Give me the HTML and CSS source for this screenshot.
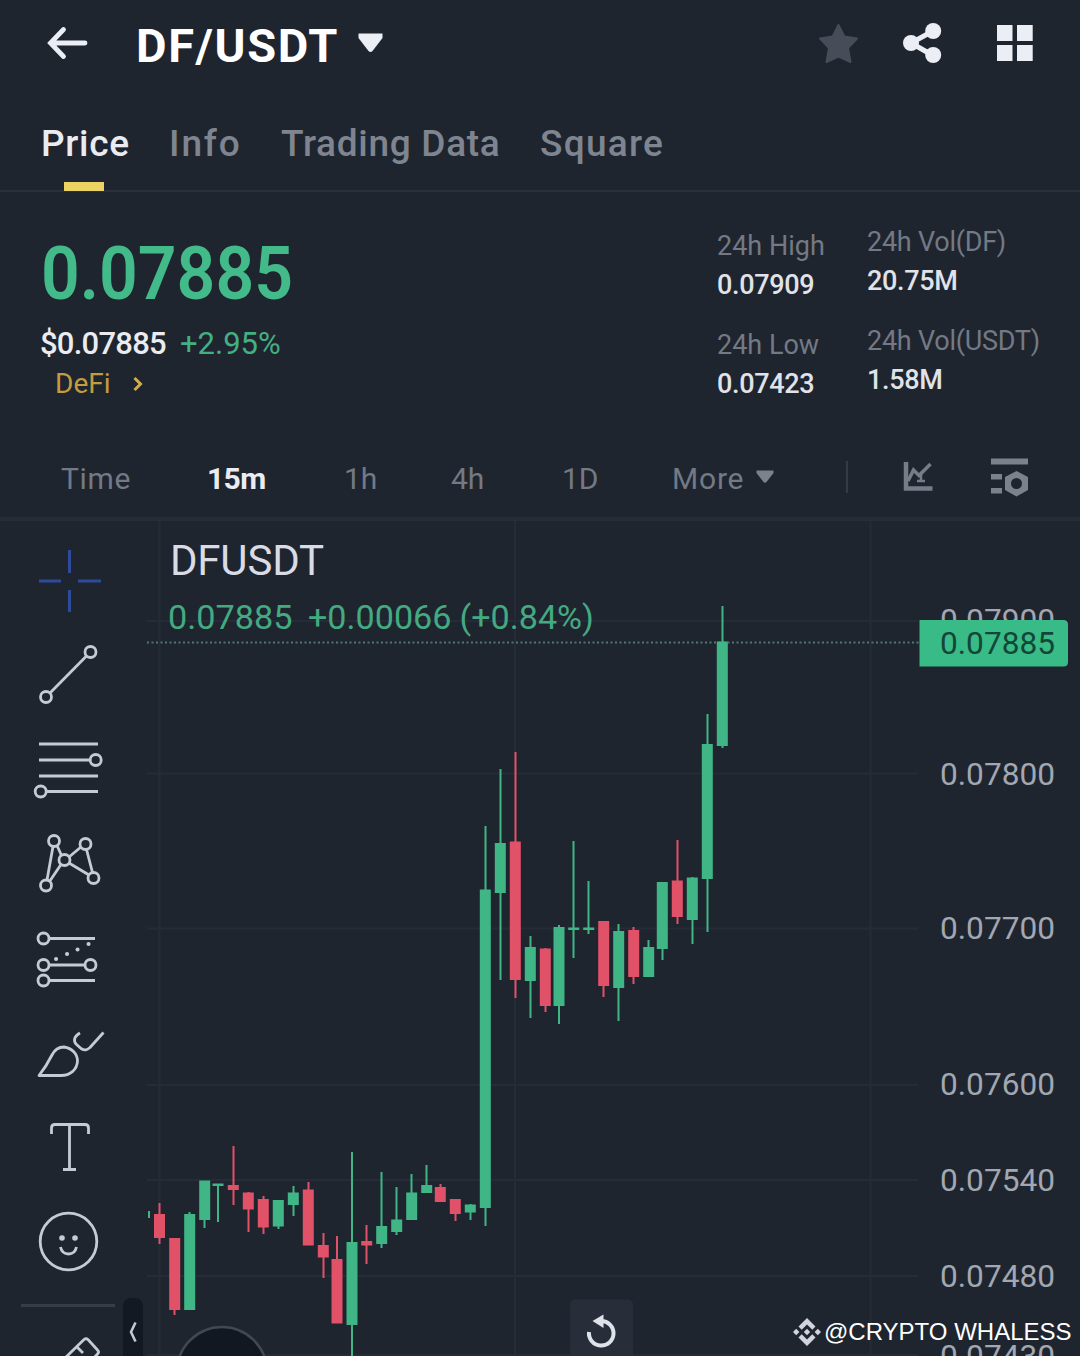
FILE: index.html
```html
<!DOCTYPE html>
<html lang="en">
<head>
<meta charset="utf-8">
<title>DF/USDT</title>
<link rel="stylesheet" href="styles.css">
</head>
<body>
<main class="screen">
  <header class="header">
    <svg class="back" width="42" height="34" viewBox="47 26 42 34"><path d="M63.500 29.500L50.500 43L63.500 56.500M51 43H85"/></svg>
    <h1 class="pair">DF/USDT</h1>
    <svg class="pair-caret" width="26" height="20" viewBox="358 34 26 20"><path d="M358.500 34.500H382.500V39L372.500 52Q370.500 54 368.500 52L358.500 39Z"/></svg>
    <nav class="actions">
      <svg width="42" height="42" viewBox="818 22 42 42"><path class="star" d="M838.500 25L844.300 36.500L857 38.500L848 48L850.500 62L838.500 56.500L826.500 62L829 48L820 38.500L832.700 36.500Z"/></svg>
      <svg width="42" height="42" viewBox="902 22 42 42"><path class="share-link" d="M933 31L911 43L933 55.500"/><g class="light"><circle cx="911" cy="43" r="8"/><circle cx="933.200" cy="31" r="8"/><circle cx="933.200" cy="55" r="8"/></g></svg>
      <svg width="38" height="38" viewBox="996 24 38 38"><path class="light" d="M997 25h15.500v16h-15.500zM1017 25h15.700v16h-15.700zM997 45h15.500v16h-15.500zM1017 45h15.700v16h-15.700z"/></svg>
    </nav>
  </header>

  <nav class="tabs">
    <a class="tab active">Price</a>
    <a class="tab info">Info</a>
    <a class="tab data">Trading Data</a>
    <a class="tab square">Square</a>
  </nav>

  <section class="summary">
    <div class="quote">
      <div class="last"><span class="condensed">0.07885</span></div>
      <div class="fiat"><b>$0.07885</b><span>+2.95%</span></div>
      <div class="tag">DeFi <svg width="12" height="18" viewBox="0 0 12 18"><path d="M2.500 3L8.500 9L2.500 15"/></svg></div>
    </div>
    <dl class="stats low-high">
      <dt>24h High</dt><dd>0.07909</dd>
      <dt class="low">24h Low</dt><dd>0.07423</dd>
    </dl>
    <dl class="stats volume">
      <dt>24h Vol(DF)</dt><dd>20.75M</dd>
      <dt class="low">24h Vol(USDT)</dt><dd>1.58M</dd>
    </dl>
  </section>

  <nav class="intervals">
    <a class="time">Time</a><a class="selected">15m</a><a>1h</a><a>4h</a><a>1D</a>
    <a class="more">More <svg width="18" height="14" viewBox="0 0 18 14"><path d="M0.500 0.500H17.500V3L10.500 12Q9 13.500 7.500 12L0.500 3Z"/></svg></a>
    <i class="separator"></i>
    <svg class="ind" width="30" height="32" viewBox="903 461 30 32"><path d="M906 462V488.500H932.500" stroke-width="4.500"/><path d="M908 481L913.500 470L919 475.500L930.500 464" stroke-width="3.500"/><path d="M921 474V481M917 481H925" stroke-width="2.500"/></svg>
    <svg class="settings" width="40" height="40" viewBox="990 457 40 40"><path d="M991 458.500h37v6h-37zM991 474h11v5.500h-11zM991 488h11v5.500h-11zM1016.500 471L1028 477V490L1016.500 496.500L1005 490V477ZM1016.500 478A5.500 5.500 0 1 0 1016.500 489A5.500 5.500 0 1 0 1016.500 478Z" fill-rule="evenodd"/></svg>
  </nav>

  <section class="workspace">
    <aside class="tools">
      <svg class="cross" viewBox="0 534 147 94"><path d="M69.500 550V573M69.500 590V612M39 581H61M78 581H101"/></svg>
      <svg viewBox="0 628 147 94"><path d="M50 693L86.500 656"/><circle cx="90.500" cy="652" r="5.500"/><circle cx="46" cy="697" r="5.500"/></svg>
      <svg viewBox="0 722 147 94"><path d="M39 744H98M39 760H90M39 776H98M46 791.500H98"/><circle cx="95.700" cy="760" r="5.500"/><circle cx="40.700" cy="791.500" r="5.500"/></svg>
      <svg viewBox="0 816 147 94"><path d="M53 846.500L47 880M57 845.500L61.500 855.500M81 847L69 857M86.500 849.500L92.500 872.500M69 863L89 875M49.500 881.500L61 864.500"/><circle cx="54" cy="841" r="5.500"/><circle cx="85.500" cy="844" r="5.500"/><circle cx="64.500" cy="860" r="5.500"/><circle cx="93.500" cy="878" r="5.500"/><circle cx="46" cy="885.500" r="5.500"/></svg>
      <svg viewBox="0 910 147 94"><path d="M49 938.500H95M49 965H85M49 980.500H95"/><circle cx="43.500" cy="938.500" r="5.500"/><circle cx="43.500" cy="965" r="5.500"/><circle cx="90.500" cy="965" r="5.500"/><circle cx="43.500" cy="980.500" r="5.500"/><path class="dots" d="M56 959h.1M67 954h.1M77.500 949.500h.1M88.500 944h.1"/></svg>
      <svg viewBox="0 1004 147 94"><path stroke-linejoin="round" d="M39 1075.500C45 1068 49 1061 52 1055C55 1049 59 1047 64 1047C72 1048 77.500 1054 77.500 1061C77 1070 70 1075.500 61 1075.500ZM80 1033C74.500 1036 73 1040 76 1044L81 1048.500C85 1051 87 1050 90 1047.500L103.500 1032.500"/></svg>
      <svg viewBox="0 1098 147 94"><path d="M51.500 1134V1128Q51.500 1124.500 55 1124.500H85Q88.500 1124.500 88.500 1128V1134M69.500 1125V1169M63 1169.500H76"/></svg>
      <svg viewBox="0 1192 147 94"><circle cx="68.500" cy="1241.500" r="28.300"/><path d="M60.500 1247Q62 1254 68.500 1254T76.500 1247"/><g class="eyes"><circle cx="62" cy="1238" r="2.800"/><circle cx="75" cy="1238" r="2.800"/></g></svg>
      <hr>
      <svg class="last-tool" viewBox="0 1308 147 48"><path d="M63 1360L84 1339.500Q86 1338 88 1339.500L97.500 1350Q99.500 1352 97.500 1354L92 1360M77 1347L83 1353"/></svg>
      <button class="handle"><svg width="12" height="24" viewBox="0 0 12 24"><path d="M8.500 2.500L4 12L8.500 21.500"/></svg></button>
    </aside>

    <svg class="chart" width="933" height="835" viewBox="147 521 933 835">
      <path class="grid" d="M147 621H918M147 773.500H918M147 928.500H918M147 1085H918M147 1180H918M147 1276H918M147 1355H918M159.500 521V1356M515 521V1356M870.500 521V1356"/>
      <path class="price-line" d="M147 642.500H920"/>
      <g class="up">
        <path class="wick" d="M149 1211V1218M189.500 1212V1310M204.500 1181V1228M218 1184V1222M278.500 1200V1229M293.500 1186V1216M352 1152V1356M381.500 1172V1248M396.500 1187V1235M411.500 1174V1220M426.500 1165V1193M470.500 1204V1220M485.500 826V1226M500.500 769V980M530.500 936V1018M559 925V1024M573.500 841V958M588.500 881V934M618.500 924V1021M648.500 940V977M662.500 882V960M692.500 877V944M707.500 714V932M722.500 606V748"/>
        <path class="body" d="M189.700 1214V1310M204.700 1180.500V1220M218 1183.500V1186M278.300 1200V1226.500M293.300 1192.500V1205M352 1242V1325M381.700 1226V1244M396.700 1219.500V1232M411.700 1192.500V1220M426.700 1185V1193M470.300 1204.500V1212.500M485.300 889.500V1208M500.300 843V893M530.300 947V981M559 927V1006M573.700 927.500V930M588.700 927.500V930M618.700 931V988M648.700 947V977M662.300 882V949M692.300 877.500V920M707.300 744V879M722.300 641.500V746"/>
      </g>
      <g class="down">
        <path class="wick" d="M159.500 1203V1244M174.500 1238V1315M233.500 1146V1205M248.500 1192V1232M263.500 1196V1234M308.500 1182V1245M323.500 1233V1278M337 1236V1323M366.500 1225V1264M440.500 1184V1202M455.500 1199V1221M515.500 752V998M545.500 948V1012M603.500 921V997M633.500 927V984M677.500 840V924"/>
        <path class="body" d="M159.500 1214V1238M174.700 1238V1310M233.300 1185V1190M248.300 1192.500V1209.500M263.300 1199V1227.500M308.300 1189.500V1245.500M323.300 1245V1257.500M337 1259V1323.500M366.700 1241V1245.500M440.300 1187V1202M455.300 1199V1214M515.300 841.500V980M545.300 948.500V1006M603.700 921V986M633.700 930V977M677.300 880.500V917"/>
      </g>
      <text class="symbol" x="170" y="575" textLength="154">DFUSDT</text>
      <g class="change">
        <text x="168" y="628.500" textLength="124.500" lengthAdjust="spacingAndGlyphs">0.07885</text>
        <text x="308" y="628.500" textLength="143.500" lengthAdjust="spacingAndGlyphs">+0.00066</text>
        <text x="459.500" y="628.500" textLength="134.500" lengthAdjust="spacingAndGlyphs">(+0.84%)</text>
      </g>
      <g class="axis">
        <text x="940" y="630.500" textLength="115" lengthAdjust="spacingAndGlyphs">0.07900</text>
        <text x="940" y="784.500" textLength="115" lengthAdjust="spacingAndGlyphs">0.07800</text>
        <text x="940" y="939" textLength="115" lengthAdjust="spacingAndGlyphs">0.07700</text>
        <text x="940" y="1095" textLength="115" lengthAdjust="spacingAndGlyphs">0.07600</text>
        <text x="940" y="1191" textLength="115" lengthAdjust="spacingAndGlyphs">0.07540</text>
        <text x="940" y="1287" textLength="115" lengthAdjust="spacingAndGlyphs">0.07480</text>
        <text x="940" y="1366.500" textLength="115" lengthAdjust="spacingAndGlyphs">0.07430</text>
      </g>
      <path class="tag-bg" d="M919.500 620H1063.500Q1068 620 1068 624.500V662Q1068 666.500 1063.500 666.500H919.500Z"/>
      <text class="tag-text" x="940" y="654" textLength="115" lengthAdjust="spacingAndGlyphs">0.07885</text>
      <circle class="dial" cx="222" cy="1372" r="45"/>
      <rect class="reset-bg" x="570" y="1299.500" width="63" height="70" rx="5"/>
      <path class="reset" d="M589 1332A12.300 12.300 0 1 0 601 1321"/>
      <path class="reset-head" d="M592.500 1321L603.500 1314.500V1328Z"/>
    </svg>
  </section>

  <div class="watermark">
    <svg width="28" height="28" viewBox="0 0 28 28"><path d="M14 0L22.500 8.500L19.300 11.700L14 6.400L8.700 11.700L5.500 8.500ZM14 28L22.500 19.500L19.300 16.300L14 21.600L8.700 16.300L5.500 19.500ZM14 10.800L17.200 14L14 17.200L10.800 14ZM3.200 10.800L6.400 14L3.200 17.200L0 14ZM24.800 10.800L28 14L24.800 17.200L21.600 14Z"/></svg>
    <span>@CRYPTO WHALESS</span>
  </div>
</main>
</body>
</html>
```
FILE: styles.css
```css
* { box-sizing: border-box; }
body { margin: 0; background: #1f252f; font-family: Roboto, "Liberation Sans", sans-serif; }
svg { display: block; flex: none; }
.screen { position: relative; width: 1080px; height: 1356px; overflow: hidden; background: #1f252f; color: #eaecf2; }

.header { display: flex; align-items: center; height: 86px; padding: 0 46px 0 47px; }
.back path { fill: none; stroke: #eceef5; stroke-width: 4.800px; stroke-linecap: round; }
.pair { margin: 5px 0 0 47px; width: 222px; font-size: 47px; line-height: 60px; font-weight: 700; letter-spacing: 1.600px; color: #fff; }
.pair-caret { fill: #eceef5; }
.actions { display: flex; align-items: center; margin-left: auto; gap: 52px; }
.actions svg:nth-child(2) { margin-left: -10px; }
.star { fill: #474d58; stroke: #474d58; stroke-width: 2px; stroke-linejoin: round; }
.light { fill: #eceef5; }
.share-link { fill: none; stroke: #eceef5; stroke-width: 5px; }

.tabs { display: grid; grid-template-columns: 128px 112px 259px auto; height: 106px; padding-left: 41px; border-bottom: 2px solid #2b313c; }
.tab { position: relative; font-size: 37px; line-height: 116px; font-weight: 500; letter-spacing: 0.700px; color: #7f8590; white-space: nowrap; }
.tab.active { color: #eaecf2; }
.tab.info { letter-spacing: 1.900px; }
.tab.square { letter-spacing: 1.300px; }
.tab.active::after { content: ""; position: absolute; left: 23px; top: 96px; width: 40px; height: 9px; background: #ecd163; }

.summary { display: flex; height: 248px; padding-left: 40px; }
.quote { width: 677px; padding-top: 41px; }
.last { height: 91px; font-size: 75px; line-height: 80px; font-weight: 600; color: #42ba8a; }
.condensed { display: inline-block; margin-left: 1px; transform: scaleX(.905); transform-origin: left; }
.fiat { display: flex; gap: 14px; font-size: 31px; line-height: 40px; }
.fiat b { font-weight: 500; letter-spacing: -.750px; }
.fiat span { color: #43b083; }
.tag { display: flex; align-items: center; gap: 21px; padding-left: 15px; font-size: 28px; line-height: 40px; color: #c39c40; }
.tag path { fill: none; stroke: #d6ab4a; stroke-width: 3px; }
.stats { margin: 35px 0 0; width: 150px; font-size: 27px; white-space: nowrap; }
.stats.volume { margin-top: 31px; width: 200px; letter-spacing: -.250px; }
.stats dt { line-height: 38px; color: #737985; }
.stats dd { margin: 0; line-height: 40px; font-weight: 500; color: #e0e3ea; letter-spacing: -.350px; }
.stats .low { margin-top: 21px; }

.intervals { display: grid; grid-template-columns: 146px 137px 107px 111px 110px 174px 57px 87px auto; align-items: center; height: 81px; padding: 0 0 4px 61px; border-bottom: 4px solid #262c38; font-size: 30px; color: #737985; }
.intervals a { padding-top: 3px; }
.intervals .time { letter-spacing: .700px; }
.intervals .selected { font-weight: 700; letter-spacing: -.600px; color: #eaecf2; }
.more { display: flex; align-items: center; gap: 12px; letter-spacing: .800px; }
.more svg { margin-top: -3px; }
.more path, .settings path { fill: #7c818c; }
.separator { width: 2px; height: 32px; background: #343b47; }
.ind path { fill: none; stroke: #777c88; }

.workspace { display: grid; grid-template-columns: 147px 933px; height: 835px; }
.tools { position: relative; padding-top: 13px; overflow: hidden; }
.tools > svg { width: 147px; height: 94px; fill: none; stroke: #c6cad4; stroke-width: 2.800px; }
.tools .cross { stroke: #2e4a9c; stroke-width: 3px; }
.tools .dots { stroke-width: 4px; stroke-linecap: round; }
.tools .eyes { fill: #c6cad4; stroke: none; }
.tools hr { width: 94px; height: 3px; margin: 18px 0 1px 21px; border: 0; background: #373d48; }
.tools > .last-tool { height: 48px; }
.handle { position: absolute; left: 123px; bottom: 0; width: 20px; height: 58px; padding: 9px 0 0 4px; border: 0; border-radius: 8px 8px 0 0; background: #131923; }
.handle path { fill: none; stroke: #c6cad4; stroke-width: 2.500px; }

.chart text { font-family: Roboto, "Liberation Sans", sans-serif; }
.grid { stroke: #262c37; stroke-width: 2px; }
.price-line { stroke: #4e796f; stroke-width: 2px; stroke-dasharray: 2 2.500; }
.wick { stroke-width: 2px; }
.body { stroke-width: 11px; }
.up { stroke: #40b687; }
.down { stroke: #e15168; }
.symbol { font-size: 42px; fill: #d9dce5; }
.change { font-size: 33px; fill: #43aa81; }
.axis { font-size: 31px; fill: #a2a7b2; }
.tag-bg { fill: #38bb87; }
.tag-text { font-size: 31px; fill: #144637; }
.dial { fill: #121822; stroke: #414853; stroke-width: 2.500px; }
.reset-bg { fill: #272e39; }
.reset { fill: none; stroke: #dfe2e9; stroke-width: 4px; }
.reset-head { fill: #dfe2e9; }

.watermark { position: absolute; left: 793px; top: 1318px; display: flex; gap: 3px; font: 24px/28px "Liberation Sans", Arial, sans-serif; color: #fff; white-space: nowrap; }
.watermark path { fill: #d1d4df; }
```
